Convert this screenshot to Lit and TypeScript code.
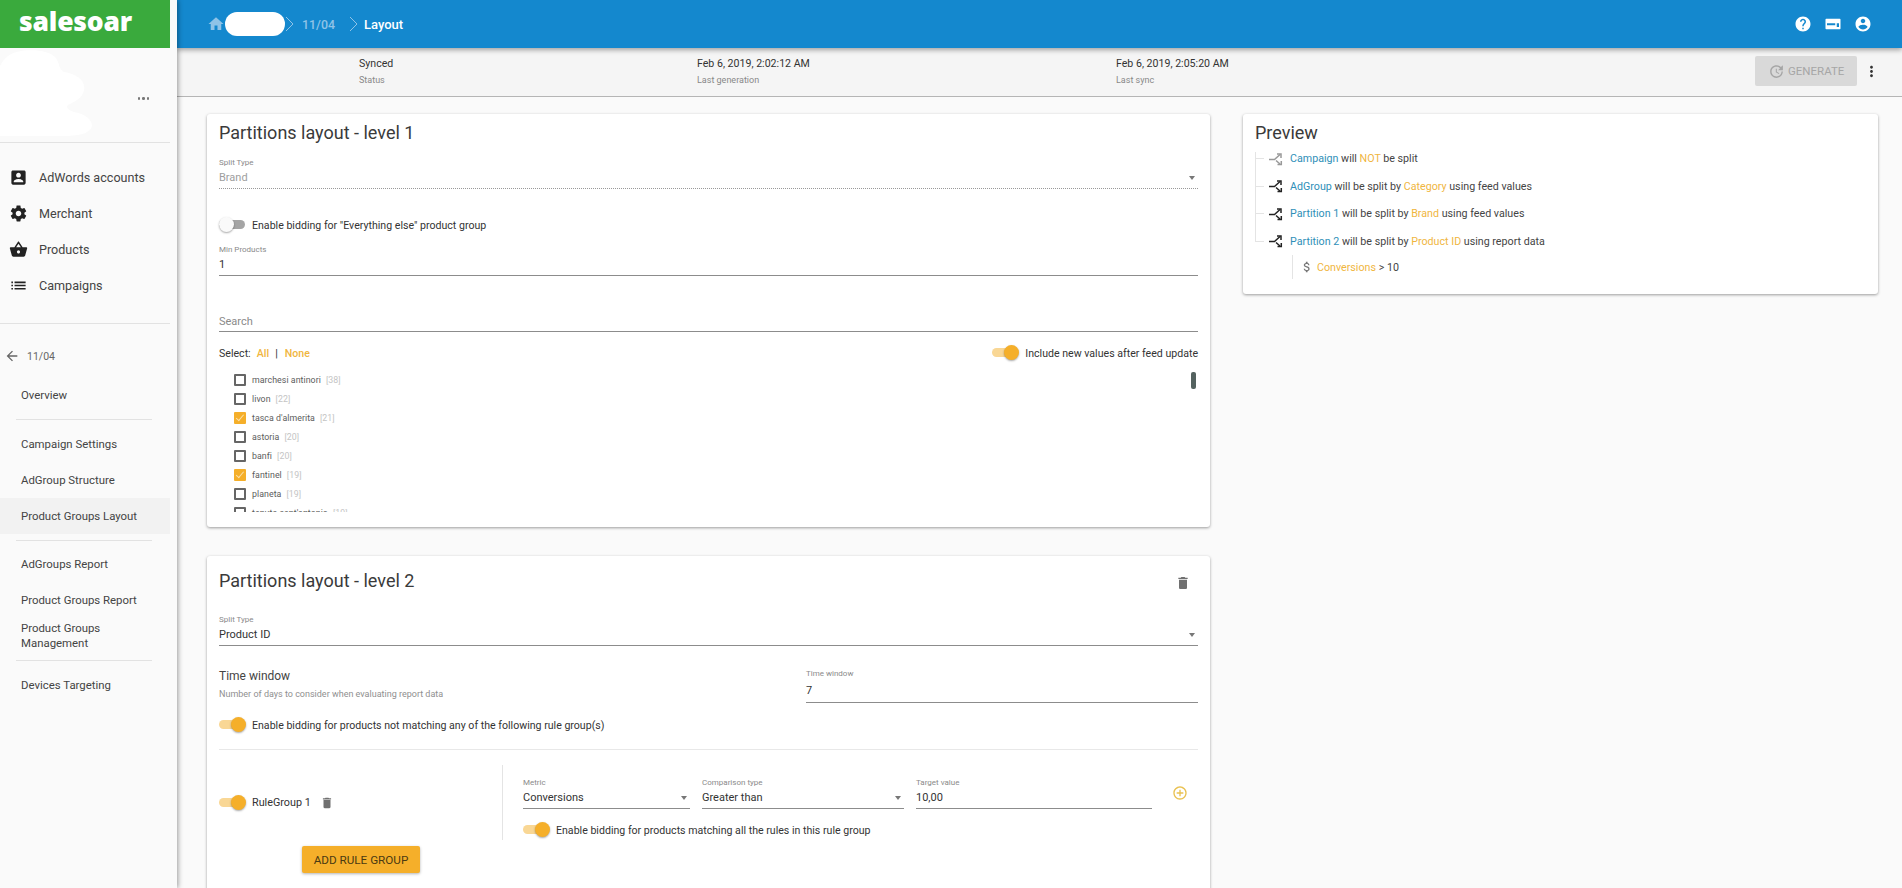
import { LitElement, html, css, svg } from "lit";
import { customElement } from "lit/decorators.js";

const P: Record<string, string> = {
  home: "M10 20v-6h4v6h5v-8h3L12 3 2 12h3v8z",
  account: "M3 5v14c0 1.1.89 2 2 2h14c1.1 0 2-.9 2-2V5c0-1.1-.9-2-2-2H5c-1.11 0-2 .9-2 2zm12 4c0 1.66-1.34 3-3 3s-3-1.34-3-3 1.34-3 3-3 3 1.34 3 3zm-9 8c0-2 4-3.1 6-3.1s6 1.1 6 3.1v1H6v-1z",
  settings: "M19.43 12.98c.04-.32.07-.64.07-.98s-.03-.66-.07-.98l2.11-1.65c.19-.15.24-.42.12-.64l-2-3.46c-.12-.22-.39-.3-.61-.22l-2.49 1c-.52-.4-1.08-.73-1.69-.98l-.38-2.65C14.46 2.18 14.25 2 14 2h-4c-.25 0-.46.18-.49.42l-.38 2.65c-.61.25-1.17.59-1.69.98l-2.49-1c-.23-.09-.49 0-.61.22l-2 3.46c-.13.22-.07.49.12.64l2.11 1.65c-.04.32-.07.65-.07.98s.03.66.07.98l-2.11 1.65c-.19.15-.24.42-.12.64l2 3.46c.12.22.39.3.61.22l2.49-1c.52.4 1.08.73 1.69.98l.38 2.65c.03.24.24.42.49.42h4c.25 0 .46-.18.49-.42l.38-2.65c.61-.25 1.17-.59 1.69-.98l2.49 1c.23.09.49 0 .61-.22l2-3.46c.12-.22.07-.49-.12-.64l-2.11-1.65zM12 15.5c-1.93 0-3.5-1.57-3.5-3.5s1.57-3.5 3.5-3.5 3.5 1.57 3.5 3.5-1.57 3.5-3.5 3.5z",
  basket: "M17.21 9l-4.38-6.56c-.19-.28-.51-.42-.83-.42-.32 0-.64.14-.83.43L6.79 9H2c-.55 0-1 .45-1 1 0 .09.01.18.04.27l2.54 9.27c.23.84 1 1.46 1.92 1.46h13c.92 0 1.69-.62 1.93-1.46l2.54-9.27L23 10c0-.55-.45-1-1-1h-4.79zM9 9l3-4.4L15 9H9zm3 8c-1.1 0-2-.9-2-2s.9-2 2-2 2 .9 2 2-.9 2-2 2z",
  list: "M3 13h2v-2H3v2zm0 4h2v-2H3v2zm0-8h2V7H3v2zm4 4h14v-2H7v2zm0 4h14v-2H7v2zM7 7v2h14V7H7z",
  back: "M20 11H7.83l5.59-5.59L12 4l-8 8 8 8 1.41-1.41L7.83 13H20v-2z",
  help: "M12 2C6.48 2 2 6.48 2 12s4.48 10 10 10 10-4.48 10-10S17.52 2 12 2zm1 17h-2v-2h2v2zm2.07-7.75l-.9.92C13.45 12.9 13 13.5 13 15h-2v-.5c0-1.1.45-2.1 1.17-2.83l1.24-1.26c.37-.36.59-.86.59-1.41 0-1.1-.9-2-2-2s-2 .9-2 2H8c0-2.21 1.79-4 4-4s4 1.79 4 4c0 .88-.36 1.68-.93 2.25z",
  circle: "M12 2C6.48 2 2 6.48 2 12s4.48 10 10 10 10-4.48 10-10S17.52 2 12 2zm0 3c1.66 0 3 1.34 3 3s-1.34 3-3 3-3-1.34-3-3 1.34-3 3-3zm0 14.2c-2.5 0-4.71-1.28-6-3.22.03-1.99 4-3.08 6-3.08 1.99 0 5.97 1.09 6 3.08-1.29 1.94-3.5 3.22-6 3.22z",
  panel: "M3 5h18a1 1 0 0 1 1 1v12a1 1 0 0 1-1 1H3a1 1 0 0 1-1-1V6a1 1 0 0 1 1-1zM4 11v2.5h11V11zM17 11v5h3v-5z",
  trash: "M6 19c0 1.1.9 2 2 2h8c1.1 0 2-.9 2-2V7H6v12zM19 4h-3.5l-1-1h-5l-1 1H5v2h14V4z",
  more: "M12 8c1.1 0 2-.9 2-2s-.9-2-2-2-2 .9-2 2 .9 2 2 2zm0 2c-1.1 0-2 .9-2 2s.9 2 2 2 2-.9 2-2-.9-2-2-2zm0 6c-1.1 0-2 .9-2 2s.9 2 2 2 2-.9 2-2-.9-2-2-2z",
  add: "M13 7h-2v4H7v2h4v4h2v-4h4v-2h-4V7zm-1-5C6.48 2 2 6.48 2 12s4.48 10 10 10 10-4.48 10-10S17.52 2 12 2zm0 18c-4.41 0-8-3.59-8-8s3.59-8 8-8 8 3.59 8 8-3.59 8-8 8z",
  money: "M11.8 10.9c-2.27-.59-3-1.2-3-2.15 0-1.09 1.01-1.85 2.7-1.85 1.78 0 2.44.85 2.5 2.1h2.21c-.07-1.72-1.12-3.3-3.21-3.81V3h-3v2.16c-1.94.42-3.5 1.68-3.5 3.61 0 2.31 1.91 3.46 4.7 4.13 2.5.6 3 1.48 3 2.41 0 .69-.49 1.79-2.7 1.79-2.06 0-2.87-.92-2.98-2.1h-2.2c.12 2.19 1.76 3.42 3.68 3.83V21h3v-2.15c1.95-.37 3.5-1.5 3.5-3.55 0-2.84-2.43-3.81-4.7-4.4z",
  update: "M21 10.12h-6.78l2.74-2.82c-2.73-2.7-7.15-2.8-9.88-.1-2.73 2.71-2.73 7.08 0 9.79s7.15 2.71 9.88 0C18.32 15.65 19 14.08 19 12.1h2c0 1.98-.88 4.55-2.64 6.29-3.51 3.48-9.21 3.48-12.72 0-3.5-3.47-3.53-9.11-.02-12.58s9.14-3.47 12.65 0L21 3v7.12zM12.5 8v4.25l3.5 2.08-.72 1.21L11 13V8h1.5z",
};

const icon = (n: string, size: number, color: string) =>
  html`<svg class="ic" width=${size} height=${size} viewBox="0 0 24 24" fill=${color} fill-rule="evenodd">${svg`<path d=${P[n]}></path>`}</svg>`;

const split = (color: string) =>
  html`<svg class="ic" width="14" height="14" viewBox="0 0 14 14" fill="none" stroke=${color} stroke-width="1.5">
    ${svg`<path d="M0 7.5h5.5L11 2.5M7 8.5l4 3.5"></path><path d="M8 2h4v4M8.5 12.6h3.8V9"></path>`}
  </svg>`;

const chevron = html`<svg class="ic" width="9" height="16" viewBox="0 0 9 16" fill="none" stroke="#8fc3e7" stroke-width="1">${svg`<path d="M1 1l7 7-7 7"></path>`}</svg>`;

const toggle = (on: boolean) => html`<span class="tg ${on ? "on" : ""}"><i></i></span>`;

const items: [string, string, boolean][] = [
  ["marchesi antinori", "[38]", false],
  ["livon", "[22]", false],
  ["tasca d'almerita", "[21]", true],
  ["astoria", "[20]", false],
  ["banfi", "[20]", false],
  ["fantinel", "[19]", true],
  ["planeta", "[19]", false],
  ["tenuta sant'antonio", "[19]", false],
];

@customElement("app-root")
export class AppRoot extends LitElement {
  static styles = css`
    :host { display: block; height: 888px; overflow: hidden; font-family: Roboto, "Liberation Sans", sans-serif; color: #333; background: #fafafa; }
    * { box-sizing: border-box; }
    .ic { display: block; flex: none; }
    .app { display: flex; height: 888px; }

    .side { width: 177px; flex: none; background: #fafafa; box-shadow: 1px 0 5px rgba(0,0,0,.4); position: relative; z-index: 3; padding-right: 7px; }
    .logo { height: 48px; background: #3aaa3d; color: #fff; font: 800 26.5px/42px "Open Sans", sans-serif; padding-left: 19px; letter-spacing: -.2px; }
    .user { height: 95px; border-bottom: 1px solid #e2e2e2; position: relative; display: flex; justify-content: flex-end; padding: 49px 21px 0 0; }
    .blob { position: absolute; left: 0; top: 2px; }
    .dots { display: flex; gap: 2px; height: 3px; }
    .dots i { width: 2.5px; height: 2.5px; border-radius: 50%; background: #777; }
    .nav { padding: 16px 0 20px; border-bottom: 1px solid #e2e2e2; }
    .nav a { height: 36px; display: flex; align-items: center; gap: 11px; padding-left: 9px; font-size: 12.6px; color: #444; }
    .back { margin-top: 20px; height: 24px; display: flex; align-items: center; gap: 7px; padding-left: 4px; font-size: 10.5px; color: #666; }
    .subnav { margin-top: 9px; }
    .subnav a { display: flex; align-items: center; min-height: 36px; padding-left: 21px; font-size: 11.4px; line-height: 15px; color: #444; }
    .subnav a.act { background: #f2f2f2; }
    .subnav hr { border: 0; height: 1px; background: #e2e2e2; margin: 6px 18px 6px 16px; }
    .subnav hr.s { margin-bottom: 5px; }

    .main { flex: 1; min-width: 0; display: flex; flex-direction: column; }
    .top { height: 48px; flex: none; background: #1488ce; box-shadow: 0 2px 5px rgba(0,0,0,.35); position: relative; z-index: 2; display: flex; align-items: center; padding: 0 0 0 30px; color: #fff; font-size: 13px; }
    .crumb-blob { width: 60px; height: 24px; border-radius: 12px; background: #fff; }
    .crumb-a { color: #8fc3e7; font-weight: 500; font-size: 12.4px; margin: 0 14px 0 8px; }
    .crumb-b { font-weight: 500; margin-left: 6px; }
    .top-ic { margin-left: auto; display: flex; gap: 12px; padding-right: 30px; }

    .sub { height: 49px; flex: none; background: #f5f5f5; border-bottom: 1px solid #b5b5b5; display: grid; grid-template-columns: 338px 419px 1fr auto auto; padding: 9px 0 0 182px; position: relative; z-index: 1; }
    .sub b { display: block; font: 400 10.6px/14px Roboto, sans-serif; color: #333; }
    .sub small { display: block; font-size: 9px; line-height: 14px; color: #888; margin-top: 2px; }
    .gen { width: 102px; height: 30px; margin: -1px 6px 0 0; background: #d9d9d9; border-radius: 2px; display: flex; align-items: center; gap: 3px; padding-left: 13px; font-size: 11.5px; color: #a6a6a6; }
    .kebab { width: 17px; height: 30px; margin: -1px 22px 0 0; padding-right: 1px; display: flex; align-items: center; }

    .content { flex: 1; display: flex; align-items: flex-start; gap: 33px; padding: 17px 24px 0 30px; }
    .col { width: 1003px; flex: none; }
    .card { background: #fff; border-radius: 3px; padding: 0 12px; box-shadow: 0 1px 3px rgba(0,0,0,.38); }
    .card + .card { margin-top: 29px; }
    .c1 { height: 413px; }
    .c2 { height: 420px; }
    .title { height: 38px; font-size: 18px; line-height: 38px; font-weight: 400; color: #3a3a3a; }
    .c2 .title { height: 50px; line-height: 50px; margin-bottom: 8px; display: flex; justify-content: space-between; align-items: center; }
    .c2 .title .ic { margin: 3px 7px 0 0; }

    .f { display: block; }
    .f label { display: block; height: 12px; font-size: 8px; line-height: 12px; color: #8a8a8a; white-space: nowrap; }
    .f .v { display: flex; justify-content: space-between; align-items: center; height: 20px; padding-bottom: 2px; font-size: 11px; color: #333; border-bottom: 1px solid #8c8c8c; }
    .f.dis { margin-top: 5px; }
    .f.dis .v { color: #9e9e9e; border-bottom: 1px dotted #999; }
    .f.min { margin-top: 9px; }
    .f.search { margin-top: 36px; }
    .f .ph { color: #8a8a8a; padding-top: 2px; }
    .arr { width: 0; height: 0; border: 3.5px solid transparent; border-top: 4px solid #777; border-bottom: 0; margin-right: 3px; }
    .row { display: flex; align-items: center; height: 20px; gap: 6px; font-size: 10.6px; color: #333; }
    .row.t1 { margin-top: 26px; }
    .row.t2 { margin-top: 12px; }
    .tg { width: 27px; height: 16px; position: relative; display: block; flex: none; }
    .tg::before { content: ""; position: absolute; left: 0; right: 1px; top: 3px; height: 9px; border-radius: 5px; background: #a5a5a5; }
    .tg i { position: absolute; left: 0; top: 0; width: 15px; height: 15px; border-radius: 50%; background: #fafafa; box-shadow: 0 1px 2px rgba(0,0,0,.35); }
    .tg.on::before { background: #f9d795; }
    .tg.on i { left: 12px; background: #f5af2a; }

    .sel { justify-content: space-between; margin-top: 11px; }
    .sel span.l { display: flex; gap: 6px; }
    .sel em { font-style: normal; font-weight: 500; color: #f0b63f; }
    .sel em + em { margin-left: 1px; }
    .sel .r { display: flex; align-items: center; gap: 6px; }
    .list { margin-top: 7px; height: 142px; overflow: hidden; position: relative; padding-left: 15px; }
    .li { height: 19px; display: flex; align-items: center; gap: 6px; font-size: 8.8px; color: #5c5c5c; letter-spacing: .05px; }
    .li u { text-decoration: none; color: #c4c4c4; margin-left: -1px; }
    .cb { width: 12px; height: 12px; border: 2px solid #666; border-radius: 1px; flex: none; }
    .cb.on { background: #f5af2a; border-color: #f5af2a; position: relative; }
    .cb.on::after { content: ""; position: absolute; left: 2.2px; top: -.2px; width: 3.4px; height: 6.5px; border: solid #fbe0aa; border-width: 0 1.3px 1.3px 0; transform: rotate(40deg); }
    .thumb { position: absolute; right: 2px; top: 2px; width: 5px; height: 17px; border-radius: 2px; background: #54625f; }

    .tw { display: flex; justify-content: space-between; height: 35px; margin-top: 22px; }
    .tw h4 { margin: 0; font-weight: 400; font-size: 12px; line-height: 16px; color: #444; }
    .tw p { margin: 4px 0 0; font-size: 9px; line-height: 12px; color: #8f8f8f; }
    .tw .f { width: 392px; }
    .tw .f .v { height: 23px; }
    .sep { height: 1px; background: #e8e8e8; margin-top: 14px; }
    .rule { display: flex; height: 75px; margin-top: 15px; }
    .rl { width: 284px; flex: none; display: flex; align-items: center; gap: 6px; font-size: 10.8px; color: #333; border-right: 1px solid #e4e4e4; }
    .rl .ic { margin-left: 3px; }
    .rr { padding: 12px 0 0 20px; flex: 1; }
    .fields { display: flex; gap: 12px; align-items: flex-start; }
    .fields .a { width: 167px; } .fields .b { width: 202px; } .fields .c { width: 236px; }
    .fields .ic { margin: 8px 0 0 8px; }
    .rr .row { margin-top: 11px; }
    .addb { margin: 6px 0 0 83px; width: 118px; height: 27px; display: flex; align-items: center; justify-content: center; border-radius: 2px; background: #f5af2a; color: #4a3a12; font-size: 11.7px; font-weight: 400; box-shadow: 0 1px 3px rgba(0,0,0,.3); }

    .prev { width: 635px; flex: none; height: 180px; }
    .tree { margin-top: -7px; position: relative; }
    .tree::before { content: ""; position: absolute; left: 0; top: 7px; height: 89px; width: 1px; background: #e4e4e4; }
    .pr { height: 27.5px; display: flex; align-items: center; font-size: 10.7px; color: #444; white-space: pre; }
    .pr .stub { width: 9px; height: 1px; background: #e4e4e4; margin-right: 5px; flex: none; }
    .pr .ic { margin-right: 7px; }
    .pr b { font-weight: 400; color: #2f8fb8; }
    .pr em { font-style: normal; color: #f0b63f; }
    .psub { margin: 0 0 0 37px; border-left: 1px solid #e4e4e4; height: 24px; display: flex; align-items: center; font-size: 10.7px; color: #444; white-space: pre; padding-left: 7px; }
    .psub .ic { margin-right: 3px; }
    .psub em { font-style: normal; color: #f0b63f; }
  `;

  render() {
    const nav = [["account", "AdWords accounts"], ["settings", "Merchant"], ["basket", "Products"], ["list", "Campaigns"]];
    return html`<div class="app">
      <aside class="side">
        <div class="logo">salesoar</div>
        <div class="user">
          <svg class="blob" width="92" height="88" viewBox="0 0 92 88" fill="#fff">${svg`<path d="M8 6c10-8 40-8 48 2 4 6 2 10 8 14 12 2 22 8 20 18-1 8-10 12-14 14-6 2-2 6 4 8 12 2 18 8 18 14-2 8-14 10-30 10H0V16C2 12 4 9 8 6z"></path>`}</svg>
          <div class="dots"><i></i><i></i><i></i></div>
        </div>
        <nav class="nav">${nav.map(([i, t]) => html`<a>${icon(i, 19, "#222")}<span>${t}</span></a>`)}</nav>
        <div class="back">${icon("back", 16, "#666")}<span>11/04</span></div>
        <div class="subnav">
          <a>Overview</a><hr />
          <a>Campaign Settings</a><a>AdGroup Structure</a><a class="act">Product Groups Layout</a><hr class="s" />
          <a>AdGroups Report</a><a>Product Groups Report</a><a>Product Groups<br />Management</a><hr />
          <a>Devices Targeting</a>
        </div>
      </aside>
      <div class="main">
        <header class="top">
          ${icon("home", 18, "#8fc3e7")}<div class="crumb-blob"></div>${chevron}
          <span class="crumb-a">11/04</span>${chevron}<span class="crumb-b">Layout</span>
          <div class="top-ic">${icon("help", 18, "#fff")}${icon("panel", 18, "#fff")}${icon("circle", 18, "#fff")}</div>
        </header>
        <div class="sub">
          <div><b>Synced</b><small>Status</small></div>
          <div><b>Feb 6, 2019, 2:02:12 AM</b><small>Last generation</small></div>
          <div><b>Feb 6, 2019, 2:05:20 AM</b><small>Last sync</small></div>
          <div class="gen">${icon("update", 17, "#a6a6a6")}<span>GENERATE</span></div>
          <div class="kebab">${icon("more", 17, "#333")}</div>
        </div>
        <div class="content">
          <div class="col">
            <section class="card c1">
              <div class="title">Partitions layout - level 1</div>
              <div class="f dis"><label>Split Type</label><div class="v"><span>Brand</span><i class="arr"></i></div></div>
              <div class="row t1">${toggle(false)}<span>Enable bidding for "Everything else" product group</span></div>
              <div class="f min"><label>Min Products</label><div class="v"><span>1</span></div></div>
              <div class="f search"><div class="v"><span class="ph">Search</span></div></div>
              <div class="row sel">
                <span class="l">Select: <em>All</em> | <em>None</em></span>
                <span class="r">${toggle(true)}<span>Include new values after feed update</span></span>
              </div>
              <div class="list">
                ${items.map(([n, c, on]) => html`<div class="li"><span class="cb ${on ? "on" : ""}"></span><span>${n}</span><u>${c}</u></div>`)}
                <div class="thumb"></div>
              </div>
            </section>
            <section class="card c2">
              <div class="title"><span>Partitions layout - level 2</span>${icon("trash", 16, "#707070")}</div>
              <div class="f"><label>Split Type</label><div class="v"><span>Product ID</span><i class="arr"></i></div></div>
              <div class="tw">
                <div><h4>Time window</h4><p>Number of days to consider when evaluating report data</p></div>
                <div class="f"><label>Time window</label><div class="v"><span>7</span></div></div>
              </div>
              <div class="row t2">${toggle(true)}<span>Enable bidding for products not matching any of the following rule group(s)</span></div>
              <div class="sep"></div>
              <div class="rule">
                <div class="rl">${toggle(true)}<span>RuleGroup 1</span>${icon("trash", 14, "#707070")}</div>
                <div class="rr">
                  <div class="fields">
                    <div class="f a"><label>Metric</label><div class="v"><span>Conversions</span><i class="arr"></i></div></div>
                    <div class="f b"><label>Comparison type</label><div class="v"><span>Greater than</span><i class="arr"></i></div></div>
                    <div class="f c"><label>Target value</label><div class="v"><span>10,00</span></div></div>
                    ${icon("add", 16, "#e9c150")}
                  </div>
                  <div class="row">${toggle(true)}<span>Enable bidding for products matching all the rules in this rule group</span></div>
                </div>
              </div>
              <div class="addb">ADD RULE GROUP</div>
            </section>
          </div>
          <section class="card prev">
            <div class="title">Preview</div>
            <div class="tree">
              <div class="pr"><i class="stub"></i>${split("#999")}<span><b>Campaign</b> will <em>NOT</em> be split</span></div>
              <div class="pr"><i class="stub"></i>${split("#222")}<span><b>AdGroup</b> will be split by <em>Category</em> using feed values</span></div>
              <div class="pr"><i class="stub"></i>${split("#222")}<span><b>Partition 1</b> will be split by <em>Brand</em> using feed values</span></div>
              <div class="pr"><i class="stub"></i>${split("#222")}<span><b>Partition 2</b> will be split by <em>Product ID</em> using report data</span></div>
            </div>
            <div class="psub">${icon("money", 14, "#777")}<span><em>Conversions</em> &gt; 10</span></div>
          </section>
        </div>
      </div>
    </div>`;
  }
}
